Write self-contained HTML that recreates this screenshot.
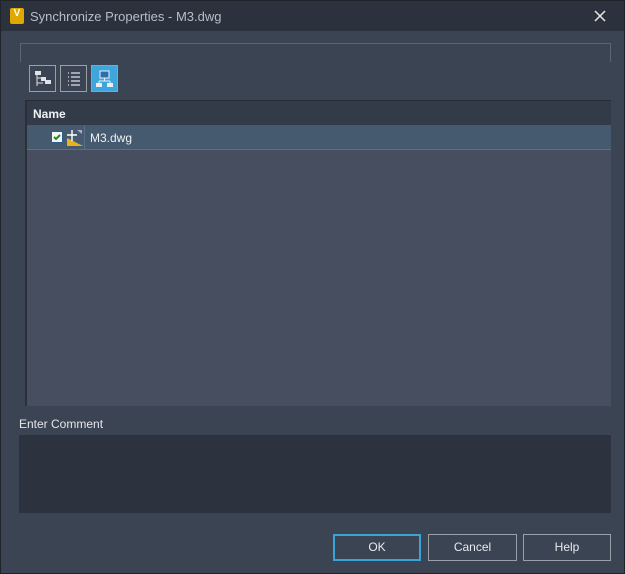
<!DOCTYPE html>
<html><head><style>
*{margin:0;padding:0;box-sizing:border-box}
body{width:625px;height:574px;background:#1f242b;font-family:"Liberation Sans",sans-serif;overflow:hidden;position:relative}
.win{position:absolute;left:1px;top:1px;width:623px;height:572px;background:#3b4453}
.title{position:absolute;left:0;top:0;width:623px;height:30px;background:#2c323d;color:#b8bec8;font-size:13px}
.abs{position:absolute}
.btn{position:absolute;top:533px;height:27px;border:1px solid #9aa0a8;color:#e8eaee;font-size:12px;text-align:center;line-height:25px;background:#3b4453}
.tb{position:absolute;top:64px;width:27px;height:27px;border:1px solid #9aa0a8}
</style></head><body>
<div class="win">
<div class="title">
 <div class="abs" style="left:9px;top:7px;width:14px;height:16px;background:#e0a800;border-radius:2px;color:#fff;font-size:10px;font-weight:bold;text-align:center;line-height:12px">V</div>
 <div class="abs" style="left:29px;top:8px">Synchronize Properties - M3.dwg</div>
 <svg class="abs" style="left:593px;top:9px" width="12" height="12"><path d="M1 1L11 11M11 1L1 11" stroke="#e8e8e8" stroke-width="1.5"/></svg>
</div>
<div class="abs" style="left:19px;top:42px;width:591px;height:19px;border-top:1px solid #5b6575;border-right:1px solid #5b6575;border-left:1px solid #5b6575"></div>
<div class="tb" style="left:28px">
 <svg width="25" height="25"><rect x="5" y="5" width="6" height="4" fill="#dfe2e6"/><rect x="11" y="11" width="5" height="4" fill="#dfe2e6"/><rect x="15" y="14" width="6" height="4" fill="#dfe2e6"/><path d="M7 9V20M7 12H11M7 17H13" stroke="#dfe2e6"/></svg>
</div>
<div class="tb" style="left:59px">
 <svg width="25" height="25"><path d="M7 7h1M7 11h1M7 15h1M7 19h1M10 7h9M10 11h9M10 15h9M10 19h9" stroke="#dfe2e6" stroke-width="1.3"/></svg>
</div>
<div class="tb" style="left:90px;background:#3ea6dc;border-color:#9aa0a8">
 <svg width="25" height="25"><rect x="8" y="5" width="9" height="7" fill="#2a6fb0" stroke="#eee"/><path d="M12.5 12v3M7 15h11M7 15v2M18 15v2" stroke="#eee"/><rect x="4" y="17" width="6" height="4" fill="#eee"/><rect x="15" y="17" width="6" height="4" fill="#eee"/></svg>
</div>
<div class="abs" style="left:24px;top:99px;width:586px;height:306px;background:#464e5f;border-left:2px solid #2a2f38;border-top:1px solid #252a33"></div>
<div class="abs" style="left:26px;top:100px;width:584px;height:24px;background:#343b48;color:#f0f2f5;font-size:12px;font-weight:bold;padding:6px 0 0 6px">Name</div>
<div class="abs" style="left:26px;top:124px;width:584px;height:25px;background:#45596f;border-bottom:1px solid #5a7088"></div>
<div class="abs" style="left:83px;top:125px;width:1px;height:23px;background:#5a7088"></div>
<div class="abs" style="left:50px;top:130px;width:12px;height:12px;background:#f4f4f4;border:1px solid #2f5b8c"></div>
<svg class="abs" style="left:51px;top:131px" width="10" height="10"><path d="M2 5L4 7L8 3" stroke="#1f8a2c" stroke-width="2" fill="none"/></svg>
<svg class="abs" style="left:66px;top:128px" width="16" height="17"><path d="M0 9L16 17H0Z" fill="#e9b21c"/><rect x="0" y="9" width="16" height="8" fill="#e9b21c"/><path d="M0 9L16 17V9Z" fill="#455b72"/><path d="M0 6H10M5 1V12" stroke="#fff" stroke-width="1.4"/><path d="M10 1L15 1L15 5Z" fill="#aac"/></svg>
<div class="abs" style="left:89px;top:130px;color:#eef0f3;font-size:12px">M3.dwg</div>
<div class="abs" style="left:18px;top:416px;color:#e4e6ea;font-size:12px">Enter Comment</div>
<div class="abs" style="left:18px;top:434px;width:592px;height:78px;background:#2d333e"></div>
<div class="btn" style="left:332px;width:88px;border:2px solid #3aa3d8;line-height:23px">OK</div>
<div class="btn" style="left:427px;width:89px">Cancel</div>
<div class="btn" style="left:522px;width:88px">Help</div>
</div>
</body></html>
